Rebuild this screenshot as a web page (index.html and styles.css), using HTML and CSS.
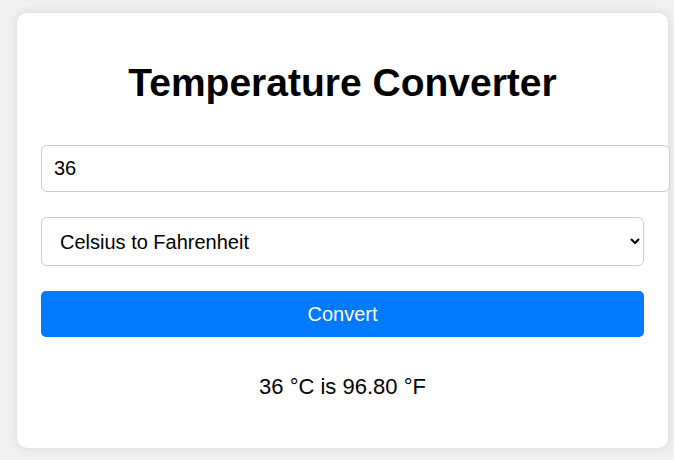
FILE: index.html
```html
<!DOCTYPE html>
<html lang="en">
<head>
  <meta charset="UTF-8">
  <title>Temperature Converter</title>
  <link rel="stylesheet" href="styles.css">
</head>
<body>

<div class="container">
  <h1>Temperature Converter</h1>
  <input type="number" id="temp" value="36" />
  <select id="mode">
    <option value="c2f">Celsius to Fahrenheit</option>
    <option value="f2c">Fahrenheit to Celsius</option>
  </select>
  <button id="convert-btn">Convert</button>
  <div class="result" id="result">36 °C is 96.80 °F</div>
</div>

</body>
</html>
```

FILE: styles.css
```css
body {
  font-family: "Liberation Sans", Arial, sans-serif;
  margin: 0;
  background: #f0f0f0;
  padding: 13px 6px 12px 17px;
}

.container {
  background: white;
  border-radius: 10px;
  box-shadow: 0 0 10px rgba(0,0,0,0.1);
  padding: 24px;
}

h1 {
  font-size: 39px;
  text-align: center;
  margin: 24px 0 40px;
}

input {
  display: block;
  width: 100%;
  height: 23px;
  padding: 11px 12px;
  font-size: 20px;
  font-family: inherit;
  border: 1px solid #ccc;
  border-radius: 6px;
  margin-bottom: 25px;
}

select {
  display: block;
  width: 100%;
  height: 49px;
  padding: 0 12px 0 14px;
  font-size: 20px;
  font-family: inherit;
  border: 1px solid #ccc;
  border-radius: 6px;
  background: white;
  margin-bottom: 25px;
}

button {
  display: block;
  width: 100%;
  height: 46px;
  padding: 0 12px;
  font-size: 20px;
  font-family: inherit;
  background: #007bff;
  color: white;
  border: none;
  border-radius: 5px;
  cursor: pointer;
}

.result {
  text-align: center;
  font-size: 22px;
  margin: 37px 0 24px;
}
```
